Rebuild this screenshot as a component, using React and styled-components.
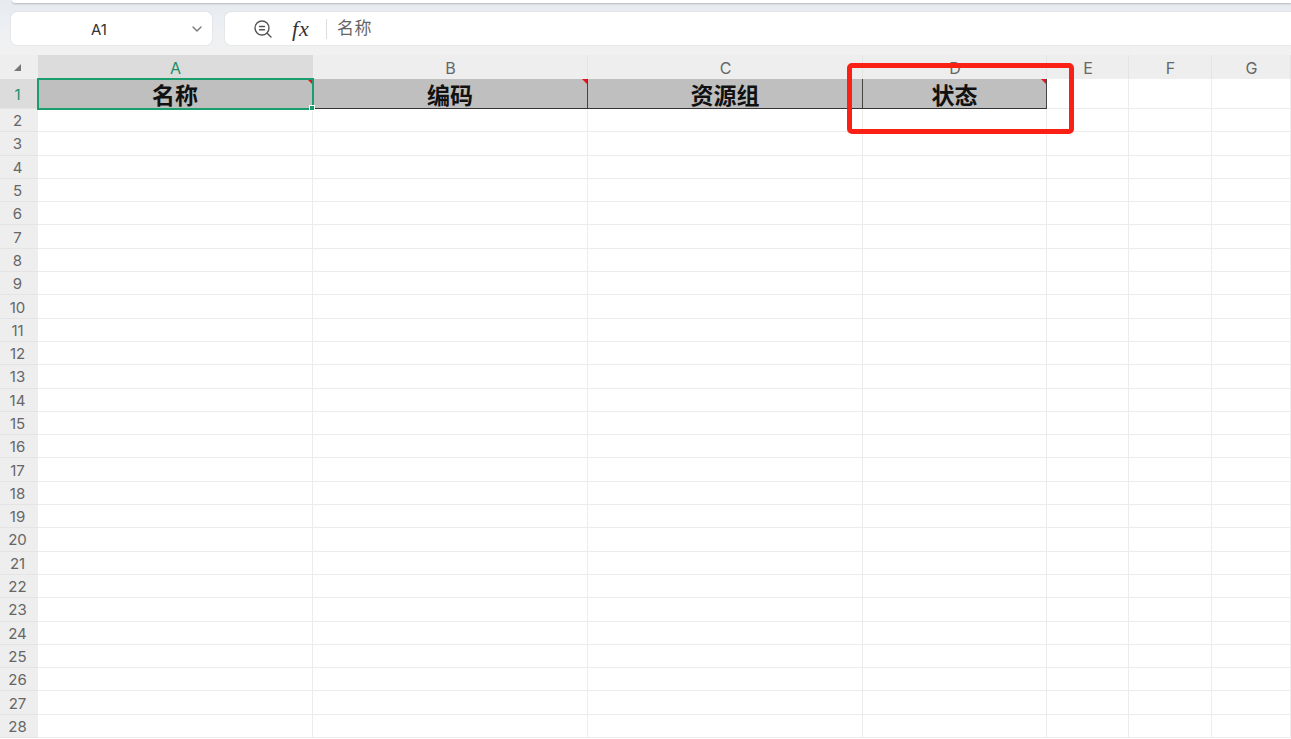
import React from "react";
import styled, { createGlobalStyle } from "styled-components";
import { ChevronDown } from "lucide-react";

const GlobalStyle = createGlobalStyle`
  html, body {
    margin: 0;
    padding: 0;
    height: 100%;
    overflow: hidden;
    background: #ffffff;
  }
`;

const Page = styled.div`
  position: relative;
  width: 1291px;
  height: 739px;
  overflow: hidden;
  font-family: Inter, "Noto Sans CJK SC", sans-serif;
`;

const TopArea = styled.div`
  height: 55px;
  background: linear-gradient(180deg, #e6ebf1 0%, #eef0f2 60%, #f1f1f1 100%);
`;

const TopCard = styled.div`
  height: 3px;
  margin-left: 12px;
  background: #ffffff;
  border-radius: 0 0 0 8px;
  box-shadow: 0 1px 2px rgba(0, 0, 0, 0.22);
`;

const Toolbar = styled.div`
  display: flex;
  gap: 13px;
  height: 33px;
  padding: 9px 0 10px 11px;
`;

const NameBox = styled.div`
  position: relative;
  flex: 0 0 201px;
  display: flex;
  align-items: center;
  justify-content: center;
  padding: 2px 25px 0 0;
  box-sizing: border-box;
  background: #ffffff;
  border-radius: 6px;
  box-shadow: 0 0 2px rgba(0, 0, 0, 0.12);
  font-size: 15px;
  color: #333333;
`;

const NameArrow = styled(ChevronDown)`
  position: absolute;
  right: 7px;
  top: 9px;
  color: #777777;
`;

const FormulaBar = styled.div`
  flex: 1;
  display: flex;
  align-items: center;
  padding-left: 28px;
  background: #ffffff;
  border-radius: 6px 0 0 6px;
  box-shadow: 0 0 2px rgba(0, 0, 0, 0.12);
`;

const FxLabel = styled.span`
  width: 20px;
  margin-left: 19px;
  font-family: "Liberation Serif", serif;
  font-style: italic;
  font-size: 22px;
  line-height: 24px;
  color: #333333;
  letter-spacing: 1px;
`;

const Divider = styled.span`
  width: 1px;
  height: 20px;
  margin: 0 10px 0 14px;
  background: #dddddd;
`;

const FormulaText = styled.span`
  position: relative;
  top: -2px;
  font-family: "Noto Sans CJK SC", sans-serif;
  font-size: 17px;
  letter-spacing: 0.5px;
  color: #666666;
`;

const Sheet = styled.div`
  display: grid;
  grid-template-columns: 38px 275px 275px 275px 184px 82px 83px 1fr;
  grid-template-rows: 24px 30px repeat(27, 23.3px);
  background: #ffffff;
`;

const Corner = styled.div`
  position: relative;
  background: #eeeeee;

  &::after {
    content: "";
    position: absolute;
    left: 14px;
    top: 9px;
    border-style: solid;
    border-width: 0 0 7px 7px;
    border-color: transparent transparent #777777 transparent;
  }
`;

const ColHead = styled.div`
  display: flex;
  align-items: center;
  justify-content: center;
  padding-top: 1px;
  font-size: 16px;
  background: ${(p) => (p.$active ? "#dcdcdc" : "#eeeeee")};
  color: ${(p) => (p.$active ? "#1a8f66" : "#666666")};
  box-shadow: inset -1px 0 0 ${(p) => (p.$active ? "#dcdcdc" : "#e4e4e4")};
`;

const RowHead = styled.div`
  display: flex;
  align-items: center;
  justify-content: center;
  padding-right: 3px;
  font-size: 15px;
  background: ${(p) => (p.$active ? "#dcdcdc" : "#eeeeee")};
  color: ${(p) => (p.$active ? "#1a8f66" : "#666666")};
  box-shadow: inset 0 -1px 0 #e4e4e4;
`;

const Cell = styled.div`
  box-sizing: border-box;
  border-right: 1px solid #ececec;
  border-bottom: 1px solid #ececec;
`;

const TitleCell = styled.div`
  position: relative;
  box-sizing: border-box;
  display: flex;
  align-items: center;
  justify-content: center;
  background: #bfbfbf;
  border-right: 1px solid #444444;
  border-bottom: 1px solid #333333;
  font-family: "Liberation Serif", "Noto Sans CJK SC", serif;
  font-weight: 700;
  font-size: 23px;
  color: #111111;

  &::after {
    content: ${(p) => (p.$note ? '""' : "none")};
    position: absolute;
    top: 0;
    right: 0;
    border-style: solid;
    border-width: 0 5px 5px 0;
    border-color: transparent #e8141c transparent transparent;
  }
`;

const Selection = styled.div`
  position: absolute;
  left: 37px;
  top: 78px;
  width: 277px;
  height: 32px;
  box-sizing: border-box;
  border: 2px solid #1a9e6e;

  &::after {
    content: "";
    position: absolute;
    right: -3px;
    bottom: -3px;
    width: 4px;
    height: 4px;
    background: #1a9e6e;
    border: 1px solid #ffffff;
  }
`;

const Highlight = styled.div`
  position: absolute;
  left: 847px;
  top: 63px;
  width: 227px;
  height: 71px;
  box-sizing: border-box;
  border: 5px solid #fb2016;
  border-radius: 5px;
`;

const columns = ["A", "B", "C", "D", "E", "F", "G"];
const titles = [
  { text: "名称", note: true },
  { text: "编码", note: true },
  { text: "资源组", note: false },
  { text: "状态", note: true },
];
const rows = Array.from({ length: 27 }, (_, i) => i + 2);

function ZoomIcon() {
  return (
    <svg width="20" height="20" viewBox="0 0 20 20" fill="none" stroke="#555555" strokeWidth="1.4" strokeLinecap="round">
      <circle cx="9" cy="9" r="7" />
      <path d="M14.2 14.2 L18 18" />
      <path d="M6.5 7.5 H11.5" />
      <path d="M6.5 10.8 H11.5" />
    </svg>
  );
}

export default function App() {
  return (
    <Page>
      <GlobalStyle />
      <TopArea>
        <TopCard />
        <Toolbar>
          <NameBox>
            A1
            <NameArrow size={16} />
          </NameBox>
          <FormulaBar>
            <ZoomIcon />
            <FxLabel>fx</FxLabel>
            <Divider />
            <FormulaText>名称</FormulaText>
          </FormulaBar>
        </Toolbar>
      </TopArea>
      <Sheet>
        <Corner />
        {columns.map((c) => (
          <ColHead key={c} $active={c === "A"}>
            {c}
          </ColHead>
        ))}
        <RowHead $active>1</RowHead>
        {titles.map((t) => (
          <TitleCell key={t.text} $note={t.note}>
            {t.text}
          </TitleCell>
        ))}
        <Cell />
        <Cell />
        <Cell />
        {rows.map((r) => (
          <React.Fragment key={r}>
            <RowHead>{r}</RowHead>
            {columns.map((c) => (
              <Cell key={c} />
            ))}
          </React.Fragment>
        ))}
      </Sheet>
      <Selection />
      <Highlight />
    </Page>
  );
}
